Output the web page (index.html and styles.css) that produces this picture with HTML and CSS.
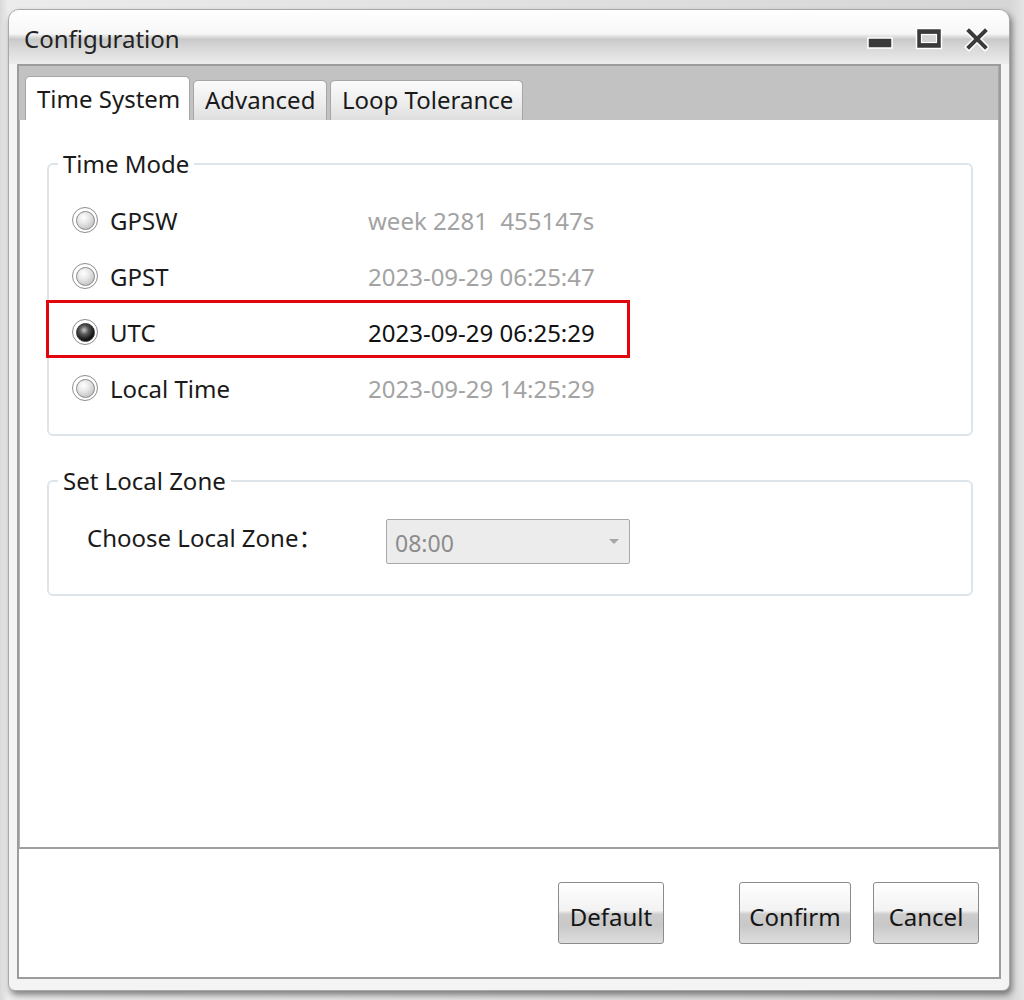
FILE: index.html
```html
<!DOCTYPE html>
<html lang="en">
<head>
<meta charset="utf-8">
<title>Configuration</title>
<link rel="stylesheet" href="styles.css">
</head>
<body>
<div class="window">
  <div class="titlebar">
    <span class="title">Configuration</span>
    <svg class="controls" width="124" height="26" viewBox="0 0 124 26">
      <rect x="3" y="12" width="24" height="10" fill="#3a3a3a" stroke="#fff" stroke-width="1.5"/>
      <rect x="51.5" y="2.5" width="25" height="20" fill="#3a3a3a" stroke="#fff" stroke-width="1.5"/>
      <rect x="56.5" y="8.5" width="15" height="8" fill="#d4d4d4" stroke="#fff" stroke-width="1.2"/>
      <g stroke-linecap="square">
        <line x1="104" y1="5" x2="120" y2="21" stroke="#fff" stroke-width="7"/>
        <line x1="120" y1="5" x2="104" y2="21" stroke="#fff" stroke-width="7"/>
        <line x1="104" y1="5" x2="120" y2="21" stroke="#3a3a3a" stroke-width="4"/>
        <line x1="120" y1="5" x2="104" y2="21" stroke="#3a3a3a" stroke-width="4"/>
      </g>
    </svg>
  </div>
  <div class="frame-body">
    <div class="inner">
      <div class="tabstrip">
        <div class="tab active">Time System</div>
        <div class="tab tab-adv">Advanced</div>
        <div class="tab tab-loop">Loop Tolerance</div>
      </div>
      <div class="tabpage">
        <fieldset class="group">
          <legend>Time Mode</legend>
          <div class="mode-rows">
            <div class="row">
              <span class="radio"></span>
              <span class="label">GPSW</span>
              <span class="value">week 2281&nbsp; 455147s</span>
            </div>
            <div class="row">
              <span class="radio"></span>
              <span class="label">GPST</span>
              <span class="value">2023-09-29 06:25:47</span>
            </div>
            <div class="row">
              <span class="radio checked"></span>
              <span class="label">UTC</span>
              <span class="value value-on">2023-09-29 06:25:29</span>
              <span class="highlight"></span>
            </div>
            <div class="row">
              <span class="radio"></span>
              <span class="label">Local Time</span>
              <span class="value">2023-09-29 14:25:29</span>
            </div>
          </div>
        </fieldset>
        <fieldset class="group group-zone">
          <legend>Set Local Zone</legend>
          <div class="zone-row">
            <span class="zone-label">Choose Local Zone：</span>
            <div class="select">
              <span class="select-text">08:00</span>
              <span class="arrow"></span>
            </div>
          </div>
        </fieldset>
      </div>
      <div class="buttons">
        <button class="btn btn-default">Default</button>
        <button class="btn btn-wide">Confirm</button>
        <button class="btn">Cancel</button>
      </div>
    </div>
  </div>
</div>
</body>
</html>
```

FILE: styles.css
```css
* { box-sizing: border-box; }

html, body {
  margin: 0;
  padding: 0;
}

body {
  width: 1024px;
  height: 1000px;
  overflow: hidden;
  background: linear-gradient(to right, #d9d9d9 0, #ececec 8px, #d6d6d6 1010px, #e4e4e4 1024px);
  font-family: "Noto Sans", "Open Sans", "Noto Sans CJK SC", sans-serif;
  color: #1a1a1a;
  padding: 9px 0 0 8px;
}

.window {
  width: 1002px;
  height: 982px;
  border: 1px solid #a8a8a8;
  border-radius: 11px 11px 7px 7px;
  background: #f4f4f4;
  box-shadow: 2px 4px 6px rgba(0, 0, 0, 0.45);
  display: flex;
  flex-direction: column;
  overflow: hidden;
}

.titlebar {
  height: 54px;
  flex: none;
  display: flex;
  align-items: flex-start;
  justify-content: space-between;
  background: linear-gradient(to bottom, #ffffff 0, #f7f7f7 44%, #c9c9c9 54%, #d9d9d9 72%, #ececec 100%);
  padding: 0 20px 0 15px;
}

.title {
  font-size: 24px;
  line-height: 30px;
  margin-top: 14px;
  color: #222;
}

.controls {
  margin-top: 16px;
  display: block;
}

.frame-body {
  flex: 1;
  display: flex;
  padding: 0 8px 11px 8px;
}

.inner {
  flex: 1;
  display: flex;
  flex-direction: column;
  border: 2px solid #9c9c9c;
  background: #fff;
}

.tabstrip {
  height: 54px;
  flex: none;
  background: #c2c2c2;
  display: flex;
  align-items: flex-end;
  gap: 3px;
  padding-left: 6px;
  border-right: 1px solid #a8a8a8;
}

.tab {
  font-size: 24px;
  line-height: 38px;
  height: 40px;
  padding: 0 11px;
  border: 1px solid #a6a6a6;
  border-bottom: none;
  border-radius: 5px 5px 0 0;
  background: linear-gradient(to bottom, #fbfbfb 0, #ececec 60%, #dedede 100%);
  color: #1a1a1a;
  white-space: nowrap;
}

.tab.active {
  height: 44px;
  line-height: 44px;
  background: #fff;
  width: 165px;
}

.tab-adv { width: 134px; }
.tab-loop { width: 193px; }

.tabpage {
  flex: 1;
  background: #fff;
  padding: 29px 25px 0 27px;
  border-bottom: 2px solid #9e9e9e;
  border-left: 1px solid #b0b0b0;
  border-right: 1px solid #b0b0b0;
}

.group {
  margin: 0;
  border: 2px solid #dde5ea;
  border-radius: 6px;
  padding: 0;
  min-width: 0;
}

.group legend {
  font-size: 24px;
  line-height: 30px;
  padding: 0 5px;
  margin-left: 9px;
  color: #1a1a1a;
}

.mode-rows {
  padding: 13px 0 18px 23px;
}

.row {
  position: relative;
  height: 56px;
  display: flex;
  align-items: center;
  font-size: 24px;
}

.radio {
  width: 26px;
  height: 26px;
  flex: none;
  border-radius: 50%;
  border: 1.5px solid #8e8e8e;
  background: #fff;
  display: flex;
  align-items: center;
  justify-content: center;
  margin-right: 12px;
}

.radio::before {
  content: "";
  width: 17px;
  height: 17px;
  border-radius: 50%;
  border: 1px solid #8a8a8a;
  background: radial-gradient(circle at 38% 32%, #ffffff 0, #e6e6e6 40%, #bdbdbd 85%, #a9a9a9 100%);
}

.radio.checked::before {
  background: radial-gradient(circle at 42% 36%, #c8c8c8 0, #5a5a5a 30%, #161616 65%, #000 100%);
  border-color: #333;
}

.label {
  width: 258px;
  flex: none;
  color: #1a1a1a;
}

.value {
  color: #a3a3a3;
}

.value-on {
  color: #111;
}

.highlight {
  position: absolute;
  left: -26px;
  top: -4px;
  width: 584px;
  height: 58px;
  border: 3px solid #e3050e;
  pointer-events: none;
}

.group-zone {
  margin-top: 30px;
}

.zone-row {
  display: flex;
  align-items: center;
  font-size: 24px;
  padding: 23px 0 30px 38px;
}

.zone-label {
  width: 299px;
  flex: none;
  margin-top: -10px;
}

.select {
  width: 244px;
  height: 45px;
  border: 1.5px solid #a9a9a9;
  border-radius: 2px;
  background: #ececec;
  display: flex;
  align-items: center;
  justify-content: space-between;
  padding: 2px 10px 0 8px;
}

.select-text {
  color: #8c8c8c;
  font-size: 23px;
}

.arrow {
  width: 0;
  height: 0;
  border-left: 5px solid transparent;
  border-right: 5px solid transparent;
  border-top: 5px solid #a6a6a6;
  margin-top: -2px;
}

.buttons {
  height: 128px;
  flex: none;
  display: flex;
  justify-content: flex-end;
  align-items: flex-start;
  padding: 33px 20px 0 0;
  gap: 22px;
  background: #fff;
}

.btn {
  font-family: inherit;
  font-size: 24px;
  color: #151515;
  height: 62px;
  width: 106px;
  padding: 6px 0 0 0;
  border: 1.5px solid #8b8b8b;
  border-radius: 3px;
  background: linear-gradient(to bottom, #ffffff 0, #f2f2f2 46%, #cdcdcd 52%, #c8c8c8 70%, #dedede 100%);
  white-space: nowrap;
}

.btn-wide { width: 112px; }

.btn-default {
  margin-right: 53px;
}
```
